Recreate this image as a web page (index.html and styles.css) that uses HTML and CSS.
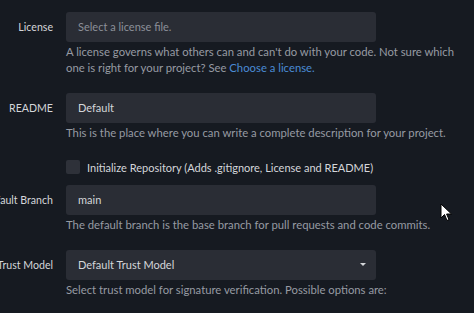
FILE: index.html
```html
<!DOCTYPE html>
<html lang="en">
<head>
  <meta charset="UTF-8" />
  <title>New Repository</title>
  <link rel="stylesheet" href="styles.css">
</head>
<body>
  <form class="repo-form">
    <div class="field">
      <label class="field-label">License</label>
      <div class="field-body">
        <div class="input placeholder">Select a license file.</div>
        <p class="help">A license governs what others can and can't do with your code. Not sure which one is right for your project? See <a href="#">Choose a license.</a></p>
      </div>
    </div>

    <div class="field">
      <label class="field-label">README</label>
      <div class="field-body">
        <div class="input">Default</div>
        <p class="help">This is the place where you can write a complete description for your project.</p>
      </div>
    </div>

    <div class="field check-field">
      <div class="field-label"></div>
      <div class="field-body">
        <label class="check"><span class="box"></span>Initialize Repository (Adds .gitignore, License and README)</label>
      </div>
    </div>

    <div class="field">
      <label class="field-label">Default Branch</label>
      <div class="field-body">
        <div class="input">main</div>
        <p class="help">The default branch is the base branch for pull requests and code commits.</p>
      </div>
    </div>

    <div class="field">
      <label class="field-label">Trust Model</label>
      <div class="field-body">
        <div class="input select">Default Trust Model <span class="caret"></span></div>
        <p class="help">Select trust model for signature verification. Possible options are:</p>
      </div>
    </div>
  </form>

  <!-- mouse pointer from the capture -->
  <svg class="cursor" width="14" height="20" viewBox="0 0 14 20">
    <path d="M1 1 L1 15 L4.5 11.5 L7 17.5 L9 16.6 L6.6 11 L11.5 11 Z" fill="#fff" stroke="#000" stroke-width="1"/>
  </svg>
</body>
</html>
```

FILE: styles.css
```css
body {
  margin: 0;
  background-color: #161a21;
  font-family: 'Lato', sans-serif;
  font-size: 11.3px;
  color: #d4d6da;
  overflow: hidden;
  position: relative;
  height: 313px;
}

.repo-form {
  padding-top: 12px;
}

.field {
  display: flex;
  gap: 13px;
  margin-bottom: 17px;
}

.field-label {
  flex: 0 0 53px;
  width: 53px;
  min-width: 0;
  display: flex;
  justify-content: flex-end;
  white-space: nowrap;
  height: 30px;
  align-items: center;
  font-size: 10.6px;
  color: #d4d6da;
}

.field-body {
  width: 310px;
  flex-shrink: 0;
}

.input {
  height: 30px;
  line-height: 30px;
  padding: 0 12px;
  background-color: #2a2d35;
  border-radius: 3px;
  font-size: 11px;
  color: #d4d6da;
  box-sizing: border-box;
  white-space: nowrap;
}

.input.placeholder {
  color: #8c9099;
}

.select {
  position: relative;
}

.caret {
  position: absolute;
  right: 10px;
  top: 13px;
  border-left: 3px solid transparent;
  border-right: 3px solid transparent;
  border-top: 3px solid #d4d6da;
}

.help {
  margin: 2px 0 0;
  width: 400px;
  line-height: 16px;
  color: #979ba3;
}

.help a {
  color: #4a8bd4;
  text-decoration: none;
}

.check-field {
  margin-top: -1px;
  margin-bottom: 8px;
}

.check-field .field-label {
  height: 20px;
}

.check {
  display: flex;
  align-items: center;
  gap: 7px;
  height: 20px;
  font-size: 11px;
  white-space: nowrap;
}

.box {
  flex-shrink: 0;
  width: 14px;
  height: 14px;
  border-radius: 2px;
  background-color: #2e3139;
}

.cursor {
  position: absolute;
  left: 440px;
  top: 203px;
}
```
